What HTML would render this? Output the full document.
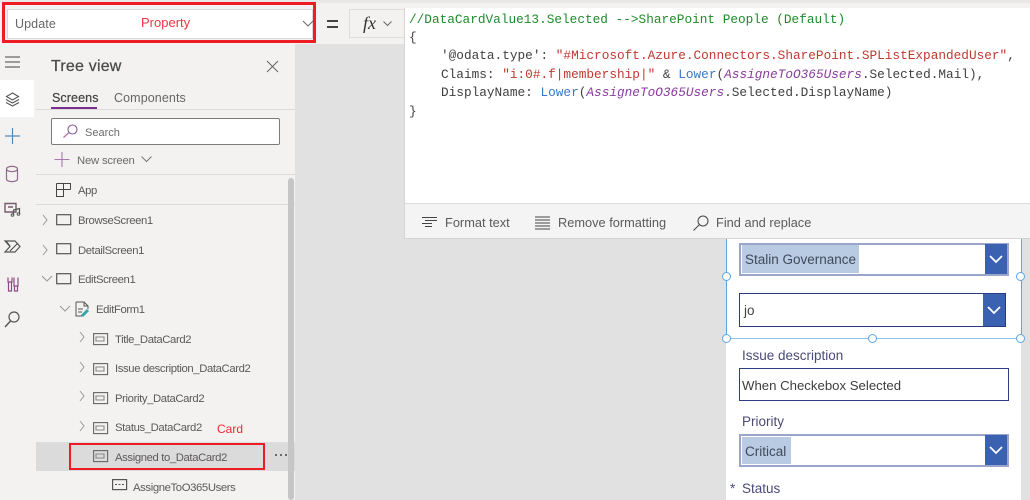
<!DOCTYPE html>
<html><head><meta charset="utf-8">
<style>
html,body{margin:0;padding:0;background:#e1e1e1}
#r{position:relative;width:1030px;height:500px;overflow:hidden;background:#e1e1e1;font-family:"Liberation Sans",sans-serif;color:#555;filter:blur(.35px)}
#r div,#r span.a{position:absolute;white-space:nowrap}
#r svg{position:absolute;overflow:visible}
.t{font-size:12px;color:#5c5a58;line-height:16px;letter-spacing:.1px}
.n{font-size:11.3px;letter-spacing:-.38px;color:#5c5a58;line-height:16px}
.code{font-family:"Liberation Mono",monospace;font-size:12.75px;line-height:18.6px;left:409px;color:#3f3f3f}
.g{color:#1f8a2c}.s{color:#c0392f}.b{color:#3a78c4}.p{color:#8a3d9e;font-style:italic}
.f{font-size:12.8px;color:#5a5a5a;top:215px;line-height:16px}
.lab{font-size:13.5px;color:#4a4a78;line-height:16px}
.dd{box-sizing:border-box;background:#fff}
.sq{background:#3a62b0}
.h{width:7px;height:7px;border:1.5px solid #5aa7e6;border-radius:50%;background:#fff}
</style></head><body>
<div id="r">
<!-- top bar -->
<div style="left:0;top:0;width:1030px;height:44px;background:#f3f2f1"></div>
<div style="left:0;top:0;width:1030px;height:3px;background:#e8e8e8"></div>
<div style="left:7px;top:9px;width:306px;height:30px;background:#fff;border:1px solid #d8d8d8;box-sizing:border-box"></div>
<div class="t" style="left:15px;top:16px;font-size:12.5px;color:#666">Update</div>
<div style="left:141px;top:15px;font-size:13px;line-height:16px;color:#f0353f">Property</div>
<svg style="left:302px;top:20px" width="12" height="8"><path d="M1 1l5 5 5-5" fill="none" stroke="#666" stroke-width="1"/></svg>
<div style="left:2px;top:2px;width:314px;height:41px;box-sizing:border-box;border:3px solid #ee1c25"></div>
<div style="left:327px;top:20px;width:11px;height:2px;background:#444"></div>
<div style="left:327px;top:26px;width:11px;height:2px;background:#444"></div>
<div style="left:349px;top:9px;width:56px;height:29px;box-sizing:border-box;background:#f3f2f1;border:1px solid #dedede"></div>
<div style="left:363px;top:12px;font-family:'Liberation Serif',serif;font-style:italic;font-size:18px;line-height:22px;color:#333">fx</div>
<svg style="left:383px;top:21px" width="9" height="6"><path d="M.5.5l4 4 4-4" fill="none" stroke="#666"/></svg>

<!-- left rail -->
<div style="left:0;top:44px;width:36px;height:456px;background:#f3f2f1;border-right:1px solid #e4e3e2"></div>
<div style="left:0;top:80px;width:34px;height:37px;background:#fff"></div>
<svg style="left:0;top:44px" width="36" height="300" fill="none">
<path d="M5 13h15M5 18h15M5 23h15" stroke="#444" stroke-width="1"/>
<path d="M12.5 49l6 3.500-6 3.500-6-3.500zM6 55.500l6.500 3.500 6.500-3.500M6 58.500l6.500 3.500 6.500-3.500" stroke="#555" stroke-width="1.100"/>
<path d="M12.5 84v16M5 92h15" stroke="#5b8ab0" stroke-width="1.200"/>
<path d="M6.500 125v10c0 3.500 11 3.500 11 0v-10c0-3.500-11-3.500-11 0c0 3.500 11 3.500 11 0" stroke="#8d6a8a" stroke-width="1.200"/>
<path d="M5 159.500h11v8.500H5zM8 163h5" stroke="#775a6e" stroke-width="1.400"/><path d="M13.500 171v-5l6-1.500v5.500" stroke="#555" stroke-width="1.200"/><circle cx="12.500" cy="171" r="1.300" stroke="#555"/><circle cx="18.500" cy="170" r="1.300" stroke="#555"/>
<path d="M5 197h10l5 5.500-5 5.500H5l5-5.500zM10 207l8-8M6 197l4 5" stroke="#555" stroke-width="1.200"/>
<path d="M8.500 238v9h3v-9M8 233.500v4.500h4v-4.500M14.500 242v5h3v-5M14 233.500v8.500h4v-8.500" stroke="#8a4d80" stroke-width="1.200"/>
<path d="M5 283l5.500-6" stroke="#555" stroke-width="1.400"/><circle cx="14" cy="273" r="5" stroke="#555" stroke-width="1.200"/>
</svg>

<!-- tree panel -->
<div style="left:36px;top:44px;width:259px;height:456px;background:#f3f2f1"></div>
<div style="left:51px;top:57px;font-size:16px;font-weight:400;line-height:20px;color:#4a4a4a;letter-spacing:.2px;-webkit-text-stroke:.25px #4a4a4a">Tree view</div>
<svg style="left:266px;top:60px" width="13" height="13"><path d="M1 1l11 11M12 1L1 12" stroke="#666" fill="none"/></svg>
<div class="t" style="left:52px;top:90px;font-size:12.5px;color:#444;-webkit-text-stroke:.2px #444">Screens</div>
<div class="t" style="left:114px;top:90px;font-size:12.5px;color:#666">Components</div>
<div style="left:51px;top:107px;width:46px;height:2px;background:#7a2f8e"></div>
<div style="left:36px;top:109px;width:259px;height:1px;background:#dcdbda"></div>
<div style="left:51px;top:118px;width:229px;height:27px;box-sizing:border-box;background:#fff;border:1px solid #7b7b7b;border-radius:2px"></div>
<svg style="left:62px;top:123px" width="17" height="17" fill="none"><circle cx="10.500" cy="6.500" r="4.500" stroke="#8a5a96" stroke-width="1.100"/><path d="M1.500 14.500l5.500-5" stroke="#a877a8" stroke-width="1.300"/></svg>
<div class="t" style="left:85px;top:125px;font-size:11px;color:#6b6b6b;letter-spacing:0">Search</div>
<svg style="left:54px;top:152px" width="16" height="16"><path d="M8 0v15M.5 7.500h15" stroke="#a678ae" stroke-width="1.100"/></svg>
<div class="n" style="left:77px;top:153px;color:#6b6b6b;letter-spacing:-.2px">New screen</div>
<svg style="left:141px;top:156px" width="11" height="7"><path d="M.5.500l5 5 5-5" fill="none" stroke="#777"/></svg>
<div style="left:36px;top:174px;width:259px;height:1px;background:#dcdbda"></div>
<div style="left:36px;top:204px;width:259px;height:1px;background:#dcdbda"></div>
<svg style="left:56px;top:183px" width="15" height="14" fill="none" stroke="#444"><path d="M.5.500v13h7v-13M.5 6.500h14M.5.500h14v6"/></svg>
<div class="n" style="left:78px;top:183px">App</div>

<svg style="left:40px;top:170px" width="120" height="330" fill="none" stroke="#999">
<path d="M3 45l4 5-4 5M3 75l4 5-4 5M2 106l5 5 5-5"/>
<path d="M20 136l5 5 5-5"/>
<path d="M40 162l4 5-4 5M40 192l4 5-4 5M40 221l4 5-4 5M40 251l4 5-4 5"/>
<path d="M39 285l5 5 5-5"/>
</svg>
<svg style="left:56px;top:214px" width="16" height="12" fill="none"><rect x=".7" y=".7" width="14" height="10" stroke="#555" stroke-width="1.200"/></svg>
<svg style="left:56px;top:243px" width="16" height="12" fill="none"><rect x=".7" y=".7" width="14" height="10" stroke="#555" stroke-width="1.200"/></svg>
<svg style="left:56px;top:273px" width="16" height="12" fill="none"><rect x=".7" y=".7" width="14" height="10" stroke="#555" stroke-width="1.200"/></svg>
<svg style="left:75px;top:301px" width="16" height="17" fill="none"><path d="M1 1h8l4 4v3M9 1v4h4M1 1v14h6M3 8h5M3 11h4" stroke="#555"/><path d="M7 15l6-6" stroke="#2fa8a8" stroke-width="3"/></svg>
<div class="n" style="left:78px;top:213px">BrowseScreen1</div>
<div class="n" style="left:78px;top:243px">DetailScreen1</div>
<div class="n" style="left:78px;top:272px">EditScreen1</div>
<div class="n" style="left:96px;top:302px">EditForm1</div>

<div style="left:36px;top:442px;width:259px;height:29px;background:#dcdbdb"></div>
<svg style="left:93px;top:333px" width="16" height="140" fill="none" stroke="#666" stroke-width="1.100">
<rect x=".6" y=".6" width="14" height="11"/><path d="M3 4h8v4H3z" stroke="#888"/>
<rect x=".6" y="30.600" width="14" height="11"/><path d="M3 34h8v4H3z" stroke="#888"/>
<rect x=".6" y="59.600" width="14" height="11"/><path d="M3 63h8v4H3z" stroke="#888"/>
<rect x=".6" y="89.600" width="14" height="11"/><path d="M3 93h8v4H3z" stroke="#888"/>
<rect x=".6" y="117.600" width="14" height="11"/><path d="M3 121h8v4H3z" stroke="#888"/>
</svg>
<div class="n" style="left:115px;top:332px">Title_DataCard2</div>
<div class="n" style="left:115px;top:361px">Issue description_DataCard2</div>
<div class="n" style="left:115px;top:391px">Priority_DataCard2</div>
<div class="n" style="left:115px;top:420px">Status_DataCard2</div>
<div class="n" style="left:115px;top:450px">Assigned to_DataCard2</div>
<div style="left:217px;top:421px;font-size:12px;line-height:16px;color:#ee2a33">Card</div>
<div style="left:69px;top:443px;width:196px;height:27px;box-sizing:border-box;border:2.500px solid #ee1c25"></div>
<svg style="left:275px;top:454px" width="15" height="3"><path d="M0 1h2M5 1h2M10 1h2" stroke="#444" stroke-width="1.500"/></svg>
<svg style="left:112px;top:479px" width="16" height="12" fill="none"><rect x=".6" y=".6" width="14" height="10" stroke="#555" stroke-width="1.200"/><path d="M3 5.500h2M6.500 5.500h2M10 5.500h2" stroke="#555"/></svg>
<div class="n" style="left:133px;top:480px">AssigneToO365Users</div>
<div style="left:288px;top:178px;width:6px;height:322px;background:#c6c6c6;border-radius:3px"></div>

<!-- code editor -->
<div style="left:404px;top:8px;width:626px;height:231px;background:#fff;border-left:1px solid #d5d5d5;box-sizing:border-box"></div>
<div style="left:404px;top:203px;width:626px;height:36px;background:#f4f4f4;border-top:1px solid #dcdcdc;border-bottom:1px solid #d4d4d4;box-sizing:border-box;border-left:1px solid #d5d5d5"></div>
<div class="code g" style="top:11px">//DataCardValue13.Selected --&gt;SharePoint People (Default)</div>
<div class="code" style="top:29px">{</div>
<div class="code" style="top:47px;left:441px">'@odata.type': <span class="s">"#Microsoft.Azure.Connectors.SharePoint.SPListExpandedUser"</span>,</div>
<div class="code" style="top:66px;left:441px">Claims: <span class="s">"i:0#.f|membership|"</span> &amp; <span class="b">Lower</span>(<span class="p">AssigneToO365Users</span>.Selected.Mail),</div>
<div class="code" style="top:84px;left:441px">DisplayName: <span class="b">Lower</span>(<span class="p">AssigneToO365Users</span>.Selected.DisplayName)</div>
<div class="code" style="top:103px">}</div>

<svg style="left:421px;top:216px" width="17" height="13"><path d="M1 1.500h15M4 4.500h12M1 7.500h10M4 10.500h7" stroke="#444" fill="none"/></svg>
<div class="f" style="left:445px">Format text</div>
<svg style="left:535px;top:216px" width="16" height="14"><path d="M0 1h15M0 4h15M0 7h15M0 10h15M0 13h15" stroke="#444" fill="none"/></svg>
<div class="f" style="left:558px">Remove formatting</div>
<svg style="left:692px;top:215px" width="18" height="17" fill="none" stroke="#444"><circle cx="11" cy="6" r="5"/><path d="M1.500 15.500l6-6"/></svg>
<div class="f" style="left:716px">Find and replace</div>

<!-- form -->
<div style="left:726px;top:239px;width:295px;height:261px;background:#fff"></div>
<div style="left:726px;top:239px;width:1px;height:99px;background:#5aa7e6"></div>
<div style="left:1021px;top:239px;width:1px;height:99px;background:#5aa7e6"></div>
<div style="left:726px;top:338px;width:295px;height:1px;background:#8cc4f0"></div>

<div class="dd" style="left:739px;top:243px;width:270px;height:33px;border:2px solid #9aa5cb"></div>
<div style="left:742px;top:245px;width:117px;height:28px;background:#b9cae3"></div>
<div style="left:745px;top:252px;font-size:13.500px;line-height:16px;color:#404a5a">Stalin Governance</div>
<div class="sq" style="left:985px;top:244px;width:22px;height:30px"></div>
<svg style="left:989px;top:255px" width="15" height="9"><path d="M1 1l6 6 6-6" fill="none" stroke="#fff" stroke-width="1.800"/></svg>

<div class="dd" style="left:739px;top:293px;width:267px;height:34px;border:1.500px solid #2a3a80"></div>
<div style="left:744px;top:303px;font-size:13.500px;line-height:16px;color:#444">jo</div>
<div class="sq" style="left:983px;top:294px;width:22px;height:32px"></div>
<svg style="left:987px;top:306px" width="15" height="9"><path d="M1 1l6 6 6-6" fill="none" stroke="#fff" stroke-width="1.800"/></svg>

<div class="h" style="left:722px;top:272px"></div>
<div class="h" style="left:1016px;top:272px"></div>
<div class="h" style="left:722px;top:334px"></div>
<div class="h" style="left:868px;top:334px"></div>
<div class="h" style="left:1016px;top:334px"></div>

<div class="lab" style="left:742px;top:348px">Issue description</div>
<div class="dd" style="left:739px;top:368px;width:270px;height:33px;border:1.500px solid #2f3f85"></div>
<div style="left:742px;top:378px;font-size:13.200px;line-height:16px;color:#3e3e3e">When Checkebox Selected</div>
<div class="lab" style="left:742px;top:414px">Priority</div>
<div class="dd" style="left:739px;top:434px;width:270px;height:33px;border:2px solid #9aa5cb"></div>
<div style="left:742px;top:437px;width:49px;height:27px;background:#b9cae3"></div>
<div style="left:745px;top:444px;font-size:13.500px;line-height:16px;color:#404a5a">Critical</div>
<div class="sq" style="left:985px;top:435px;width:22px;height:30px"></div>
<svg style="left:989px;top:446px" width="15" height="9"><path d="M1 1l6 6 6-6" fill="none" stroke="#fff" stroke-width="1.800"/></svg>
<div class="lab" style="left:730px;top:481px">*</div>
<div class="lab" style="left:742px;top:481px">Status</div>
</div>
</body></html>
